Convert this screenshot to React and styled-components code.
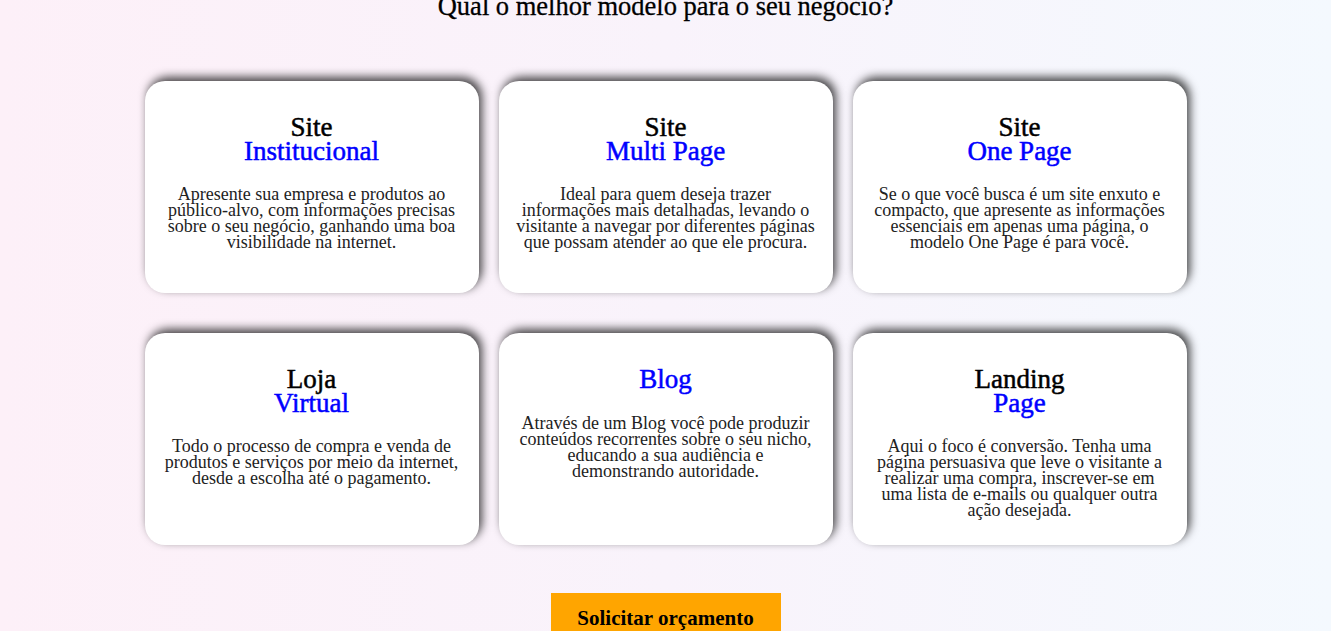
import React from 'react';
import styled, { createGlobalStyle } from 'styled-components';

const GlobalStyle = createGlobalStyle`
    html, body {
        margin: 0;
        padding: 0;
    }
    body {
        font-family: 'Liberation Serif', 'Times New Roman', serif;
        background: linear-gradient(to right, #fdf0f8 0%, #f9f3fb 50%, #f4f9fe 100%);
        min-height: 100vh;
        overflow: hidden;
    }
`;

const Section = styled.section`
    display: flex;
    flex-direction: column;
    align-items: center;
    padding-bottom: 40px;
`;

const Heading = styled.h2`
    margin: -9px 0 0;
    font-size: 26.5px;
    line-height: 30px;
    font-weight: 400;
    color: #000000;
    -webkit-text-stroke: 0.3px #000000;
`;

const Grid = styled.div`
    display: grid;
    grid-template-columns: repeat(3, 334px);
    column-gap: 20px;
    row-gap: 40px;
    margin-top: 60px;
`;

const Card = styled.div`
    height: 212px;
    box-sizing: border-box;
    padding: 34px 16.5px 0;
    background: #ffffff;
    border-radius: 20px;
    box-shadow: 3px -4px 10px rgba(0, 0, 0, 0.72);
    text-align: center;
`;

const Title = styled.h3`
    margin: 0;
    font-size: 27px;
    line-height: 24px;
    font-weight: 400;
    color: #000000;
    -webkit-text-stroke: 0.5px currentColor;
`;

const Highlight = styled.span`
    display: block;
    color: ${(props) => props.color || '#0000ff'};
`;

const Description = styled.p`
    margin: ${(props) => (props.single ? '24px' : '23px')} 0 0;
    font-size: 18px;
    line-height: 16px;
    color: #222222;
`;

const Button = styled.button`
    margin-top: 48px;
    width: 230px;
    height: 50px;
    border: none;
    background: #ffa500;
    font-family: 'Liberation Serif', 'Times New Roman', serif;
    font-size: 21px;
    font-weight: 700;
    color: #000000;
    cursor: pointer;
`;

const models = [
    {
        top: 'Site',
        accent: 'Institucional',
        text: 'Apresente sua empresa e produtos ao público-alvo, com informações precisas sobre o seu negócio, ganhando uma boa visibilidade na internet.',
    },
    {
        top: 'Site',
        accent: 'Multi Page',
        text: 'Ideal para quem deseja trazer informações mais detalhadas, levando o visitante a navegar por diferentes páginas que possam atender ao que ele procura.',
    },
    {
        top: 'Site',
        accent: 'One Page',
        text: 'Se o que você busca é um site enxuto e compacto, que apresente as informações essenciais em apenas uma página, o modelo One Page é para você.',
    },
    {
        top: 'Loja',
        accent: 'Virtual',
        text: 'Todo o processo de compra e venda de produtos e serviços por meio da internet, desde a escolha até o pagamento.',
    },
    {
        top: null,
        accent: 'Blog',
        text: 'Através de um Blog você pode produzir conteúdos recorrentes sobre o seu nicho, educando a sua audiência e demonstrando autoridade.',
    },
    {
        top: 'Landing',
        accent: 'Page',
        text: 'Aqui o foco é conversão. Tenha uma página persuasiva que leve o visitante a realizar uma compra, inscrever-se em uma lista de e-mails ou qualquer outra ação desejada.',
    },
];

const App = () => {
    return (
        <>
            <GlobalStyle />
            <Section>
                <Heading>Qual o melhor modelo para o seu negócio?</Heading>
                <Grid>
                    {models.map((model) => (
                        <Card key={model.accent}>
                            <Title>
                                {model.top}
                                <Highlight>{model.accent}</Highlight>
                            </Title>
                            <Description single={!model.top}>{model.text}</Description>
                        </Card>
                    ))}
                </Grid>
                <Button>Solicitar orçamento</Button>
            </Section>
        </>
    );
};

export default App;
